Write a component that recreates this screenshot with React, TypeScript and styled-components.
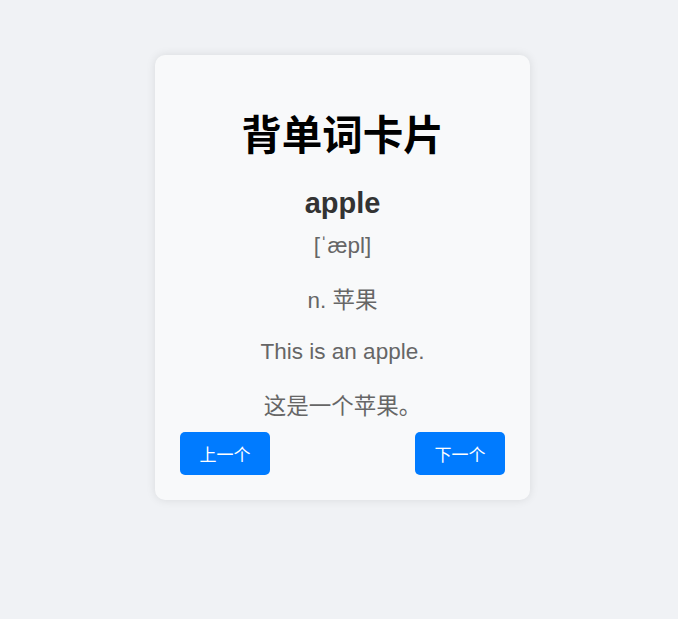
import React, { useState } from "react";
import styled, { createGlobalStyle } from "styled-components";

const Global = createGlobalStyle`
  html, body { margin: 0; padding: 0; }
  body {
    background: #f0f2f5;
    font-family: "Liberation Sans", Arial, "Noto Sans CJK SC", sans-serif;
  }
`;

const Page = styled.div`
  display: flex;
  justify-content: center;
  align-items: flex-start;
  padding: 55px 0 0 7px;
  min-height: 619px;
  box-sizing: border-box;
`;

const Card = styled.div`
  width: 375px;
  box-sizing: border-box;
  padding: 25px;
  background: #f8f9fa;
  border-radius: 10px;
  box-shadow: 0 0 10px rgba(0, 0, 0, 0.1);
  display: flex;
  flex-direction: column;
  align-items: center;
  text-align: center;
`;

const Title = styled.h1`
  margin: 32px 0 0;
  font-size: 40.5px;
  font-weight: bold;
  color: #000;
  line-height: 1.2;
`;

const Word = styled.div`
  margin-top: 25px;
  font-size: 29px;
  font-weight: bold;
  color: #333;
  line-height: 1.2;
`;

const Text = styled.div<{ $gap: number }>`
  margin-top: ${(p) => p.$gap}px;
  font-size: 22.5px;
  color: #666;
  line-height: 1.2;
`;

const Nav = styled.div`
  align-self: stretch;
  display: flex;
  justify-content: space-between;
  margin-top: 12px;
`;

const Button = styled.button`
  width: 90px;
  height: 43px;
  padding: 0;
  border: none;
  border-radius: 5px;
  background: #007bff;
  color: #fff;
  font-size: 17px;
  font-family: "Liberation Sans", Arial, "Noto Sans CJK SC", sans-serif;
  cursor: pointer;
`;

const words = [
  { word: "apple", phonetic: "[ˈæpl]", meaning: "n. 苹果", en: "This is an apple.", zh: "这是一个苹果。" },
];

export default function App() {
  const [i, setI] = useState(0);
  const w = words[i];
  return (
    <>
      <Global />
      <Page>
        <Card>
          <Title>背单词卡片</Title>
          <Word>{w.word}</Word>
          <Text $gap={12}>{w.phonetic}</Text>
          <Text $gap={28}>{w.meaning}</Text>
          <Text $gap={24}>{w.en}</Text>
          <Text $gap={28}>{w.zh}</Text>
          <Nav>
            <Button onClick={() => setI((i - 1 + words.length) % words.length)}>上一个</Button>
            <Button onClick={() => setI((i + 1) % words.length)}>下一个</Button>
          </Nav>
        </Card>
      </Page>
    </>
  );
}
